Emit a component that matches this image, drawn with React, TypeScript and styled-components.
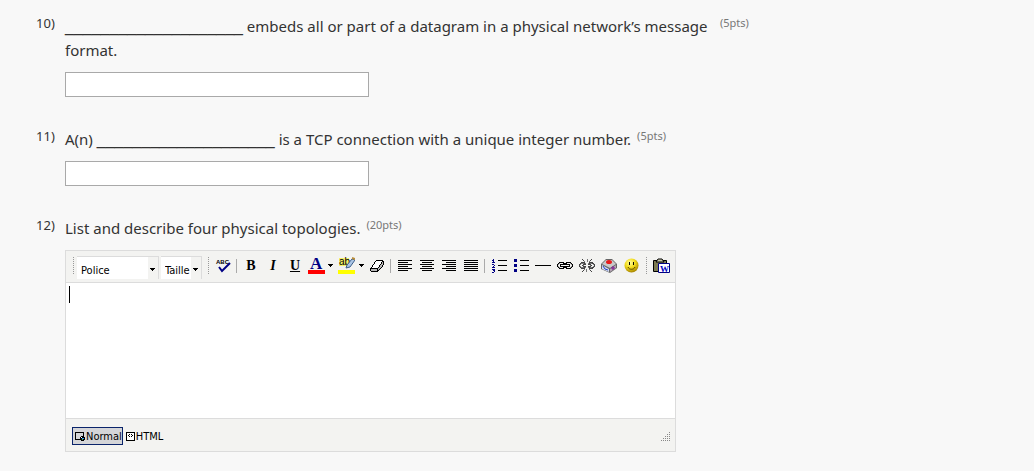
import React from "react";
import styled, { createGlobalStyle } from "styled-components";

const GlobalStyle = createGlobalStyle`
  * { box-sizing: border-box; }
  body {
    margin: 0;
    background: #f8f8f8;
    color: #333;
    font-family: "Noto Sans", "Open Sans", sans-serif;
  }
`;

const Quiz = styled.main`
  display: flex;
  flex-direction: column;
  gap: 30px;
  padding: 14px 36px 19px;
`;

const QuestionRow = styled.section`
  display: grid;
  grid-template-columns: 29px minmax(0, 1fr);
`;

const Num = styled.span`
  font-size: 13px;
  line-height: 18px;
`;

const Prompt = styled.div`
  display: flex;
  align-items: flex-start;
  gap: 6px;
  margin-bottom: 10px;
`;

const PromptText = styled.label`
  max-width: 649px;
  font-size: 15px;
  line-height: 24px;
`;

const Blank = styled.span`
  font-family: "Liberation Sans", sans-serif;
  font-size: 16px;
  line-height: 16px;
`;

const Points = styled.span`
  flex: none;
  color: #777;
  font-size: 11px;
  line-height: 18px;
`;

const Answer = styled.input`
  display: block;
  width: 304px;
  max-width: 100%;
  height: 25px;
  padding: 2px 4px;
  border: 1px solid #a9a9a9;
  background: #fff;
  font: inherit;
  font-size: 13px;
`;

const Editor = styled.div`
  max-width: 611px;
  border: 1px solid #dcdcdc;
  background: #f3f3f1;
  color: #000;
  font-family: Tahoma, "DejaVu Sans Condensed", sans-serif;
`;

const Toolbar = styled.div`
  display: flex;
  align-items: center;
  height: 32px;
  padding: 0 3px 2px;
  border-bottom: 1px solid #dcdcdc;
`;

const Grip = styled.span`
  flex: none;
  width: 8px;
  height: 17px;
  background: repeating-linear-gradient(#999 0 1px, transparent 1px 2px) center / 1px 100% no-repeat;
`;

const Divider = styled.span`
  flex: none;
  width: 6px;
  height: 14px;
  background: linear-gradient(#aaa, #aaa) 2px 0 / 1px 100% no-repeat;
`;

const PickerBox = styled.span<{ $w: number }>`
  position: relative;
  flex: none;
  width: ${(p) => p.$w}px;
  height: 23px;
  margin: 3px 2px 0 0;
`;

const Picker = styled.select`
  appearance: none;
  display: block;
  width: 100%;
  height: 100%;
  padding: 6px 9px 0 4px;
  border: 1px solid #dcdcdc;
  border-width: 1px 1px 0 0;
  border-radius: 0;
  background: linear-gradient(#f3f3f1, #f3f3f1) right / 10px 100% no-repeat #fff;
  color: #000;
  font-family: inherit;
  font-size: 11px;
`;

const PickerArrow = styled.span`
  position: absolute;
  right: 4px;
  top: 12px;
  display: flex;
  pointer-events: none;
`;

const Tool = styled.button<{ $w?: number }>`
  flex: none;
  display: flex;
  align-items: center;
  justify-content: center;
  width: ${(p) => p.$w ?? 22}px;
  height: 24px;
  padding: 0;
  border: 0;
  background: none;
  color: #000;
`;

const Letter = styled.span<{ $italic?: boolean; $underline?: boolean }>`
  font-family: "Liberation Serif", serif;
  font-size: 14px;
  line-height: 16px;
  font-weight: 700;
  font-style: ${(p) => (p.$italic ? "italic" : "normal")};
  text-decoration: ${(p) => (p.$underline ? "underline" : "none")};
`;

const Icon = styled.svg`
  display: block;
  flex: none;
`;

const Writing = styled.div`
  position: relative;
`;

const TextArea = styled.textarea`
  display: block;
  width: 100%;
  height: 135px;
  padding: 3px;
  border: 0;
  outline: 0;
  resize: none;
  background: #fff;
  font: inherit;
`;

const Caret = styled.span`
  position: absolute;
  left: 3px;
  top: 3px;
  width: 1px;
  height: 17px;
  background: #000;
`;

const Footer = styled.div`
  display: flex;
  align-items: center;
  height: 33px;
  padding: 2px 5px 0 6px;
  border-top: 1px solid #dcdcdc;
`;

const Mode = styled.button<{ $on?: boolean }>`
  display: flex;
  align-items: center;
  gap: 1px;
  height: 18px;
  padding: 0 0 0 2px;
  border: 1px solid ${(p) => (p.$on ? "#0a246a" : "transparent")};
  background: ${(p) => (p.$on ? "#d4d5d8" : "transparent")};
  color: #000;
  font-family: inherit;
  font-size: 11px;
  line-height: 16px;

  span { padding-top: 2px; }
`;

const Resize = styled(Icon)`
  margin-left: auto;
`;

const Arrow = () => (
  <Icon width="5" height="3" shapeRendering="crispEdges">
    <path d="M0 0h5v1H0zM1 1h3v1H1zM2 2h1v1H2z" />
  </Icon>
);

type Dots = { rows: string[]; colors: Record<string, string>; children?: React.ReactNode };

/* Draws a small bitmap-style icon: one character per pixel, looked up in a palette. */
const Pixels = ({ rows, colors, children }: Dots) => (
  <Icon width={rows[0].length} height={rows.length} shapeRendering="crispEdges">
    {rows.map((row, y) =>
      [...row].map((c, x) => (colors[c] ? <rect key={`${x}-${y}`} x={x} y={y} width="1" height="1" fill={colors[c]} /> : null))
    )}
    {children}
  </Icon>
);

const Lines = ({ spans }: { spans: [number, number][] }) => (
  <Icon width="14" height="12" shapeRendering="crispEdges">
    {spans.map(([x, w], i) => (
      <rect key={i} x={x} y={i * 2} width={w} height="1" />
    ))}
  </Icon>
);

const full: [number, number] = [0, 14];

const ALIGN: { name: string; spans: [number, number][] }[] = [
  { name: "Align left", spans: [full, [0, 10], full, [0, 10], full, [0, 10]] },
  { name: "Center", spans: [full, [2, 10], full, [2, 10], full, [2, 10]] },
  { name: "Align right", spans: [full, [4, 10], full, [4, 10], full, [4, 10]] },
  { name: "Justify", spans: [full, full, full, full, full, full] },
];

const Spell = () => (
  <Icon width="16" height="18">
    <text x="1" y="7" fontFamily="Liberation Sans" fontSize="6" fontWeight="700">ABC</text>
    <path d="M4 10l3 4 8-8" fill="none" stroke="#000084" strokeWidth="2" />
  </Icon>
);

const FontColor = () => (
  <Icon width="17" height="22">
    <text x="2" y="14" fontFamily="Liberation Serif" fontSize="17" fontWeight="700" fill="#000084">A</text>
    <path d="M0 15h17v4H0z" fill="red" />
  </Icon>
);

const Highlight = () => (
  <Icon width="17" height="22">
    <path d="M1 3h10v8H1z" fill="#f5f26a" />
    <text x="1" y="10" fontFamily="Liberation Sans" fontSize="10">ab</text>
    <path d="M8 13l1-3 5-6 3 1-5 7z" fill="#a9c4e4" stroke="#3c5f8c" />
    <path d="M14 3l3 1" stroke="#b98d3a" strokeWidth="2" />
    <path d="M0 15h17v4H0z" fill="#ff0" />
  </Icon>
);

const Eraser = () => (
  <Pixels
    colors={{ k: "#000", w: "#fff", g: "#b8b8b8" }}
    rows={[
      "......kkkkkkk.",
      ".....kwwwwwwkk",
      "....kwwwwwwkgk",
      "....kwwwwwwkgk",
      "...kwwwwwwkggk",
      "..kwwwwwwkggk.",
      "..kwwwwwwkggk.",
      ".kwwwwwwkggk..",
      "kkkkkkkkggk...",
      "kggggggkgk....",
      "kggggggkk.....",
      ".kkkkkkk......",
    ]}
  />
);

const LIST_LINES = (
  <path d="M6 1h9v1H6zM6 6h9v1H6zM6 11h9v1H6z" />
);

const Ordered = () => (
  <Pixels
    colors={{ b: "#000084" }}
    rows={[
      ".b.............",
      "bb.............",
      ".b.............",
      "bbb............",
      "...............",
      "bb.............",
      "..b............",
      ".b.............",
      "bbb............",
      "...............",
      "bbb............",
      ".bb............",
      "..b............",
      "bb.............",
    ]}
  >
    {LIST_LINES}
  </Pixels>
);

const Bullets = () => (
  <Pixels
    colors={{ b: "#000084" }}
    rows={[
      "bbb............",
      "bbb............",
      "bbb............",
      "...............",
      "...............",
      "bbb............",
      "bbb............",
      "bbb............",
      "...............",
      "...............",
      "bbb............",
      "bbb............",
      "bbb............",
    ]}
  >
    {LIST_LINES}
  </Pixels>
);

const Rule = () => (
  <Icon width="16" height="1"><path d="M0 0h16v1H0z" /></Icon>
);

const Link = () => (
  <Pixels
    colors={{ k: "#000", g: "#888" }}
    rows={[
      "..kkkkk..kkkkk..",
      ".kg...kkkk...gk.",
      "kg.kkkkkkkkkk.gk",
      "k..k........k..k",
      "kg.kkkkkkkkkk.gk",
      ".kg...kkkk...gk.",
      "..kkkkk..kkkkk..",
    ]}
  />
);

const Unlink = () => (
  <Pixels
    colors={{ k: "#444", g: "#777" }}
    rows={[
      "...k....g...k...",
      "....k...g..k....",
      ".....g..g.g.....",
      "..kkkk....kkkk..",
      ".kgggkg..gkggkk.",
      "kg..kkk..kkk..gk",
      "k..kg......gk..k",
      "kg..kkk..kkk..gk",
      ".kgggkg..gkggkk.",
      "..kkkk....kkkk..",
      ".....g.g..g.....",
      "....k..g...k....",
      "...k...g....k...",
    ]}
  />
);

const Picture = () => (
  <Icon width="16" height="15">
    <path d="M0 6l5-5h6l5 5v4l-7 5-9-4z" fill="#666" />
    <path d="M1 6l4-4h6l4 4-6 4z" fill="#c9c9c9" />
    <path d="M1 7l7 4v3l-7-3z" fill="#d5dcf0" />
    <path d="M9 11l6-4v3l-6 4z" fill="#b4a4b4" />
    <ellipse cx="8" cy="4" rx="3" ry="2" fill="#e81c1c" />
    <path d="M2 8l2 3 3 1" stroke="#2442c8" fill="none" />
    <path d="M10 10h4M12 8v4" stroke="#7c1590" />
  </Icon>
);

const Smiley = () => (
  <Icon width="15" height="15">
    <defs>
      <radialGradient id="face" cx="40%" cy="30%" r="70%">
        <stop offset="0" stopColor="#fffb9a" />
        <stop offset="50%" stopColor="#f2dc1c" />
        <stop offset="100%" stopColor="#a98600" />
      </radialGradient>
    </defs>
    <circle cx="7.5" cy="7.5" r="7" fill="url(#face)" />
    <path d="M5 4h1v3H5zM9 4h1v3H9z" />
    <path d="M4 9c1 3 6 3 7 0" fill="none" stroke="#5a4700" />
  </Icon>
);

const Paste = () => (
  <Icon width="17" height="16">
    <path d="M.5 2.5h13v11H.5z" fill="#7d7b52" stroke="#000" />
    <path d="M3 4l2-3h4l2 3z" fill="#c8c8a8" stroke="#000" />
    <path d="M5.500 5.500h11v9h-11z" fill="#fff" stroke="#000084" />
    <text x="7" y="14" fontFamily="Liberation Serif" fontSize="9" fontWeight="700" fill="#0000c0">W</text>
  </Icon>
);

const NormalIcon = () => (
  <Icon width="10" height="9" shapeRendering="crispEdges">
    <path d="M0 0h9v1H0zM0 1h1v7H0zM8 1h1v3H8zM1 7h4v1H1z" />
    <path d="M6 4h3v1h1v3H9v1H6V8H5V5h1z" />
    <path d="M6 5h1v1H6z" fill="#fff" />
    <path d="M7 6h2v1H7z" fill="#39f" />
    <path d="M7 7h1v1H7z" fill="#4b4" />
  </Icon>
);

const HtmlIcon = () => (
  <Pixels
    colors={{ k: "#000", w: "#fff" }}
    rows={[
      "kkkkkkkkk",
      "kwwwwwwwk",
      "kwwkwkwwk",
      "kwkwwwkwk",
      "kwwkwkwwk",
      "kwwwwwwwk",
      "kwwwwwwwk",
      "kwwwwwwwk",
      "kkkkkkkkk",
    ]}
  />
);

const RichEditor = () => (
  <Editor>
    <Toolbar>
      <Grip />
      <PickerBox $w={82}>
        <Picker aria-label="Police"><option>Police</option></Picker>
        <PickerArrow><Arrow /></PickerArrow>
      </PickerBox>
      <PickerBox $w={41}>
        <Picker aria-label="Taille"><option>Taille</option></Picker>
        <PickerArrow><Arrow /></PickerArrow>
      </PickerBox>
      <Grip />
      <Tool aria-label="Spelling"><Spell /></Tool>
      <Divider />
      <Tool aria-label="Bold"><Letter>B</Letter></Tool>
      <Tool aria-label="Italic"><Letter $italic>I</Letter></Tool>
      <Tool aria-label="Underline"><Letter $underline>U</Letter></Tool>
      <Tool aria-label="Text color" $w={20}><FontColor /></Tool>
      <Tool aria-label="Choose text color" $w={9}><Arrow /></Tool>
      <Tool aria-label="Highlight"><Highlight /></Tool>
      <Tool aria-label="Choose highlight" $w={9}><Arrow /></Tool>
      <Tool aria-label="Remove format"><Eraser /></Tool>
      <Divider />
      {ALIGN.map((a) => (
        <Tool key={a.name} aria-label={a.name}><Lines spans={a.spans} /></Tool>
      ))}
      <Divider />
      <Tool aria-label="Numbered list"><Ordered /></Tool>
      <Tool aria-label="Bulleted list"><Bullets /></Tool>
      <Tool aria-label="Horizontal line"><Rule /></Tool>
      <Tool aria-label="Link"><Link /></Tool>
      <Tool aria-label="Unlink"><Unlink /></Tool>
      <Tool aria-label="Image"><Picture /></Tool>
      <Tool aria-label="Smiley"><Smiley /></Tool>
      <Grip />
      <Tool aria-label="Paste from Word"><Paste /></Tool>
    </Toolbar>
    <Writing>
      <TextArea id="q12" />
      <Caret />
    </Writing>
    <Footer>
      <Mode $on><NormalIcon /><span>Normal</span></Mode>
      <Mode><HtmlIcon /><span>HTML</span></Mode>
      <Resize width="9" height="9" shapeRendering="crispEdges">
        {[0, 1, 2, 3, 4].map((r) =>
          Array.from({ length: r + 1 }, (_, c) => (
            <rect key={`${r}-${c}`} x={8 - c * 2} y={r * 2} width="1" height="1" fill="#888" />
          ))
        )}
      </Resize>
    </Footer>
  </Editor>
);

type QuestionProps = { n: number; points: number; text: React.ReactNode; children: React.ReactNode };

const Question = ({ n, points, text, children }: QuestionProps) => (
  <QuestionRow>
    <Num>{n})</Num>
    <div>
      <Prompt>
        <PromptText htmlFor={`q${n}`}>{text}</PromptText>
        <Points>({points}pts)</Points>
      </Prompt>
      {children}
    </div>
  </QuestionRow>
);

const blank = <Blank>____________________</Blank>;

export default function App() {
  return (
    <>
      <GlobalStyle />
      <Quiz>
        <Question n={10} points={5} text={<>{blank} embeds all or part of a datagram in a physical network’s message format.</>}>
          <Answer id="q10" type="text" />
        </Question>
        <Question n={11} points={5} text={<>A(n) {blank} is a TCP connection with a unique integer number.</>}>
          <Answer id="q11" type="text" />
        </Question>
        <Question n={12} points={20} text="List and describe four physical topologies.">
          <RichEditor />
        </Question>
      </Quiz>
    </>
  );
}
